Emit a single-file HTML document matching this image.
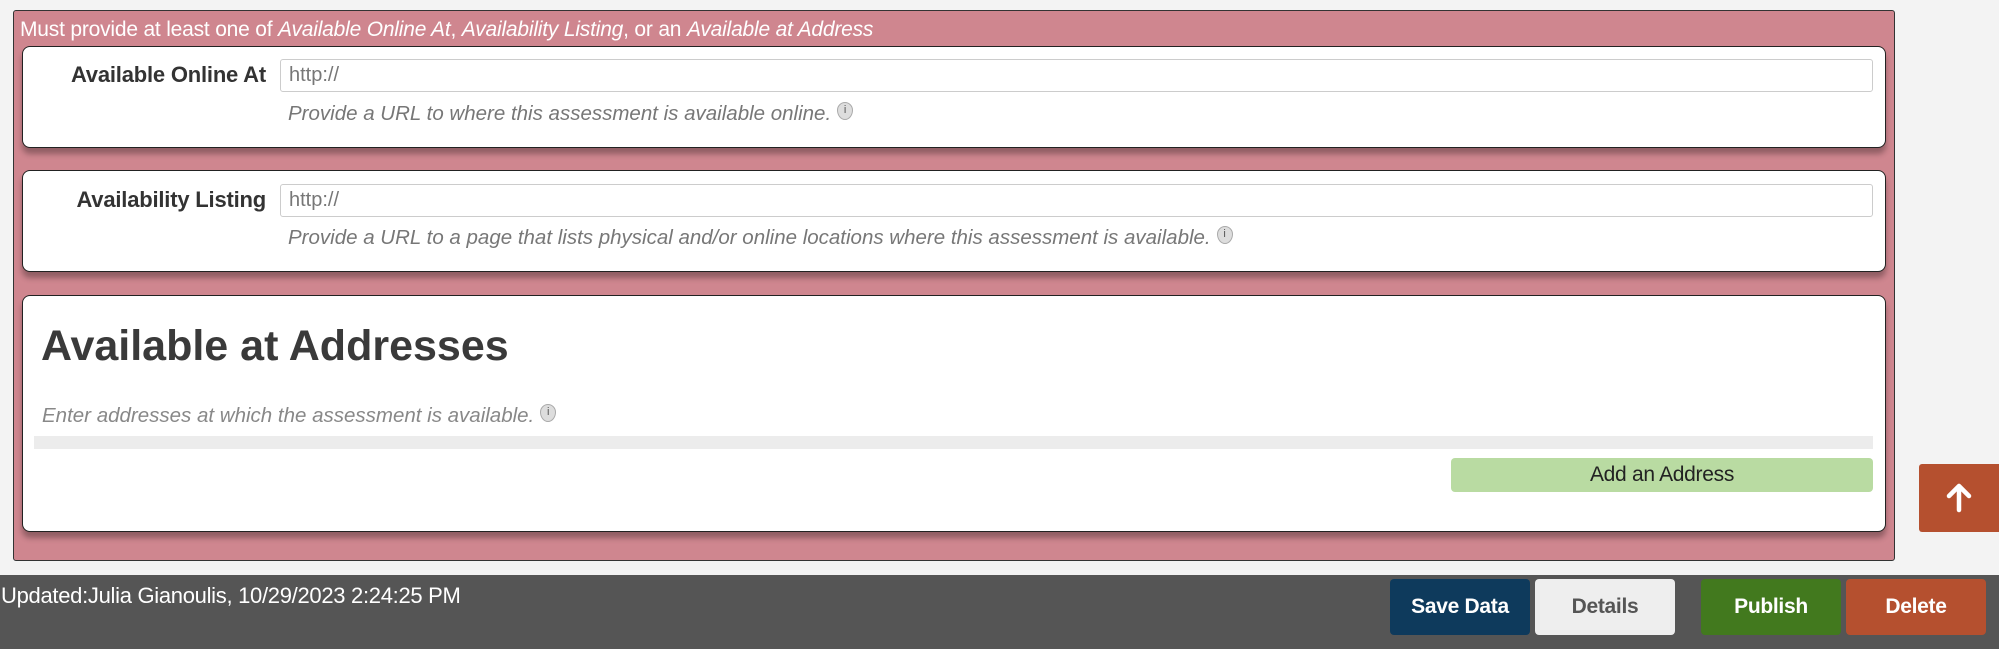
<!DOCTYPE html>
<html><head><style>
body{margin:0;width:1999px;height:649px;background:#f3f3f3;font-family:"Liberation Sans",sans-serif;position:relative;overflow:hidden}
.a{position:absolute;box-sizing:border-box}
.pink{left:13px;top:10px;width:1882px;height:551px;background:#cf868f;border:1.5px solid #333;border-radius:3px}
.card{background:#fff;border:1.5px solid #222;border-radius:8px;box-shadow:0 6px 6px rgba(0,0,0,.3);left:22px;width:1864px}
.lbl{font-weight:bold;font-size:22px;color:#333;text-align:right;width:266px;left:0px;letter-spacing:-0.2px}
.inp{left:280px;width:1593px;height:33px;border:1px solid #ccc;border-radius:3px;background:#fff;color:#777;font-size:20px;padding:4px 8px}
.help{font-style:italic;color:#777;font-size:20.5px;left:288px}
.i{display:inline-block;width:14px;height:16px;border-radius:50% 50% 50% 50%/45% 45% 55% 55%;background:#ddd;border:1px solid #aaa;font-size:11px;text-align:center;line-height:14px;color:#555;font-style:normal;vertical-align:top;margin-left:6px}
.btn{top:579px;width:140px;height:56px;border-radius:4px;font-weight:bold;font-size:21px;text-align:center;line-height:56px;color:#fff;letter-spacing:-0.3px}
</style></head><body>
<div class="a pink"></div>
<div class="a" style="left:20px;top:18px;font-size:21px;color:#fff;letter-spacing:-0.2px">Must provide at least one of <i>Available Online At</i>, <i>Availability Listing</i>, or an <i>Available at Address</i></div>

<div class="a card" style="top:46px;height:102px"></div>
<div class="a lbl" style="top:62px">Available Online At</div>
<div class="a inp" style="top:59px">http://</div>
<div class="a help" style="top:102px">Provide a URL to where this assessment is available online.<span class="i">i</span></div>

<div class="a card" style="top:170px;height:102px"></div>
<div class="a lbl" style="top:187px">Availability Listing</div>
<div class="a inp" style="top:184px">http://</div>
<div class="a help" style="top:226px">Provide a URL to a page that lists physical and/or online locations where this assessment is available.<span class="i">i</span></div>

<div class="a card" style="top:295px;height:237px"></div>
<div class="a" style="left:41px;top:322px;font-size:43px;font-weight:bold;color:#3a3a3a">Available at Addresses</div>
<div class="a help" style="left:42px;top:404px;color:#888">Enter addresses at which the assessment is available.<span class="i">i</span></div>
<div class="a" style="left:34px;top:436px;width:1839px;height:13px;background:#ececec"></div>
<div class="a" style="left:1451px;top:458px;width:422px;height:34px;background:#b9dba2;border-radius:4px;text-align:center;line-height:34px;font-size:21px;color:#222;letter-spacing:-0.3px">Add an Address</div>

<div class="a" style="left:1919px;top:464px;width:80px;height:68px;background:#b5502f;border-radius:3px 0 0 3px">
<svg width="80" height="68"><path d="M40 46V22M30 32L40 22L50 32" stroke="#fff" stroke-width="4.5" fill="none" stroke-linecap="round" stroke-linejoin="round"/></svg></div>

<div class="a" style="left:0;top:575px;width:1999px;height:74px;background:#555"></div>
<div class="a" style="left:1px;top:583px;font-size:22px;color:#fff;letter-spacing:-0.3px">Updated:Julia Gianoulis, 10/29/2023 2:24:25 PM</div>
<div class="a btn" style="left:1390px;background:#0e3a5c">Save Data</div>
<div class="a btn" style="left:1535px;background:#eee;color:#555">Details</div>
<div class="a btn" style="left:1701px;background:#42791e">Publish</div>
<div class="a btn" style="left:1846px;background:#b5502f">Delete</div>
</body></html>
